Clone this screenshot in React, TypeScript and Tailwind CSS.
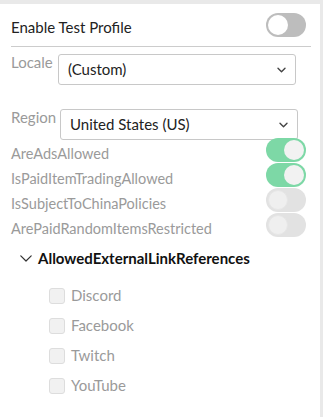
import React from "react";

const flags = [
    { name: "AreAdsAllowed", on: true },
    { name: "IsPaidItemTradingAllowed", on: true },
    { name: "IsSubjectToChinaPolicies", on: false },
    { name: "ArePaidRandomItemsRestricted", on: false },
];

const links = ["Discord", "Facebook", "Twitch", "YouTube"];

const Chevron = () => (
    <svg width="9" height="6" viewBox="0 0 9 6" fill="none">
        <path d="M1 1.2l3.5 3.5 3.5-3.5" stroke="#444" strokeWidth="1.4" strokeLinecap="round" strokeLinejoin="round" />
    </svg>
);

const Toggle = ({ on, muted }: { on: boolean; muted?: boolean }) => {
    if (on) {
        return (
            <div className="w-[40px] h-[24px] rounded-full bg-[#7dd8a6] flex items-center justify-end pr-[2px]">
                <div className="w-[20px] h-[20px] rounded-full bg-[#f2f2f2]" />
            </div>
        );
    }
    if (muted) {
        return (
            <div className="w-[40px] h-[24px] rounded-full bg-[#e2e2e2] flex items-center pl-[2px]">
                <div className="w-[20px] h-[20px] rounded-full bg-[#efefef] border border-[#e6e6e6]" />
            </div>
        );
    }
    return (
        <div className="w-[40px] h-[24px] rounded-full bg-[#bdbdbd] flex items-center pl-[2px]">
            <div className="w-[20px] h-[20px] rounded-full bg-white" />
        </div>
    );
};

const Select = ({ value }: { value: string }) => (
    <div className="w-[238px] h-[31px] border border-[#c8c8c8] rounded-[3px] bg-white flex items-center justify-between pl-[9px] pr-[9px]">
        <span className="text-[15px] text-[#222]">{value}</span>
        <Chevron />
    </div>
);

export default function App() {
    return (
        <div
            className="w-[323px] h-[417px] bg-[#e9e9e9] pt-[4px] pr-[3px] flex"
            style={{ fontFamily: "Lato, 'Noto Sans', sans-serif" }}
        >
            <div className="flex-1 bg-white flex flex-col">
                {/* ヘッダー */}
                <div className="h-[42px] pl-[11px] pr-[14px] flex items-center justify-between">
                    <span className="text-[15px] text-[#222] mt-[4px]">Enable Test Profile</span>
                    <Toggle on={false} />
                </div>
                <div className="ml-[11px] mr-[9px] h-px bg-[#cccccc]" />

                {/* ロケール・地域 */}
                <div className="mt-[7px] pl-[11px] flex items-start">
                    <span className="w-[47px] text-[15px] text-[#9a9a9a] leading-[18px] mt-[-1px]">Locale</span>
                    <Select value="(Custom)" />
                </div>
                <div className="mt-[24px] pl-[11px] flex items-start">
                    <span className="w-[49px] text-[15px] text-[#9a9a9a] leading-[18px] mt-[-1px]">Region</span>
                    <Select value="United States (US)" />
                </div>

                {/* フラグ一覧 */}
                <div className="mt-[-2px] flex flex-col">
                    {flags.map((f) => (
                        <div key={f.name} className="h-[25px] pl-[11px] pr-[14px] flex items-start justify-between">
                            <span className="text-[14.5px] text-[#9a9a9a] leading-[18px] mt-[7px]">{f.name}</span>
                            <Toggle on={f.on} muted />
                        </div>
                    ))}
                </div>

                {/* 外部リンク */}
                <div className="mt-[9px] pl-[20px] flex items-center gap-[6px]">
                    <svg width="12" height="7" viewBox="0 0 12 7" fill="none">
                        <path d="M0.8 0.8l5.2 5.2 5.2-5.2" stroke="#333" strokeWidth="1.2" strokeLinecap="round" strokeLinejoin="round" />
                    </svg>
                    <span className="text-[15px] font-bold text-[#111]">AllowedExternalLinkReferences</span>
                </div>
                <div className="mt-[11px] pl-[49px] flex flex-col">
                    {links.map((l) => (
                        <div key={l} className="h-[30px] flex items-center gap-[6px]">
                            <div className="w-[16px] h-[16px] rounded-[3px] bg-[#f1f1f1] border border-[#dddddd]" />
                            <span className="text-[15px] text-[#9a9a9a]">{l}</span>
                        </div>
                    ))}
                </div>
            </div>
        </div>
    );
}
